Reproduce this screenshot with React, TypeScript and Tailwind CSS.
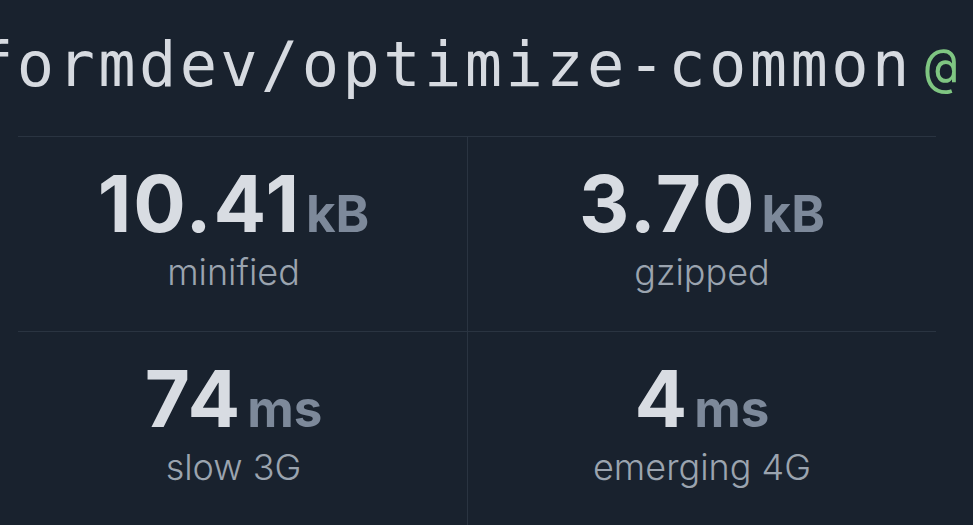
export default function App() {
  const cells = [
    [
      { n: "10.41", u: "kB", l: "minified" },
      { n: "3.70", u: "kB", l: "gzipped" },
    ],
    [
      { n: "74", u: "ms", l: "slow 3G" },
      { n: "4", u: "ms", l: "emerging 4G" },
    ],
  ];
  return (
    <div className="w-[973px] h-[525px] overflow-hidden bg-[#19222e]">
      <div className="h-[136px] pt-[34px] whitespace-nowrap ml-[-24px] font-['DejaVu_Sans_Mono',monospace] text-[62px] leading-none tracking-[3.4px] text-[#d6dae0]">
        formdev/optimize-common<span className="ml-[12px] text-[54px] text-[#7fc682]">@</span>
      </div>
      <div className="w-[936px] font-['Inter',sans-serif]">
        {cells.map((row, i) => (
          <div key={i}>
            <div className="ml-[18px] h-px bg-[#2a3441]" />
            <div className="grid grid-cols-[468px_468px]">
              {row.map((c, j) => (
                <div
                  key={j}
                  className={`h-[194px] flex flex-col items-center pt-[28px] ${
                    j === 0 ? "border-r border-[#2a3441]" : ""
                  }`}
                >
                  <div className="flex items-baseline leading-none">
                    <span className="text-[78px] font-bold text-[#d8dce2] tracking-[2px]">
                      {c.n}
                    </span>
                    <span className="ml-[5px] text-[51px] font-bold text-[#7d899a]">
                      {c.u}
                    </span>
                  </div>
                  <div className="mt-[11px] text-[36px] leading-none font-light text-[#9ba4af]">
                    {c.l}
                  </div>
                </div>
              ))}
            </div>
          </div>
        ))}
      </div>
    </div>
  );
}
